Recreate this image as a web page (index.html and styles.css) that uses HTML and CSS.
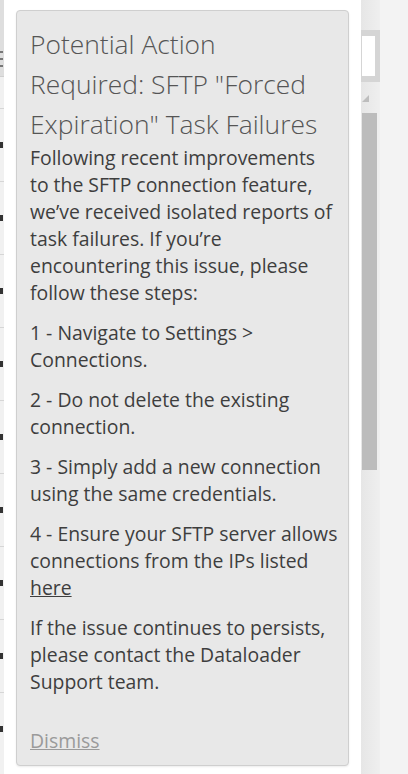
FILE: index.html
```html
<!DOCTYPE html>
<html>
<head>
<meta charset="utf-8">
<link rel="stylesheet" href="styles.css">
</head>
<body>
<div class="page">
  <div class="edge">
    <div class="edge-head"><span class="tick"></span><span class="tick"></span><span class="tick"></span></div>
    <div class="edge-gap"></div>
    <div class="edge-row"><span class="mark"></span></div>
    <div class="edge-row"><span class="mark"></span></div>
    <div class="edge-row"><span class="mark"></span></div>
    <div class="edge-row"><span class="mark"></span></div>
    <div class="edge-row"><span class="mark"></span></div>
    <div class="edge-row"><span class="mark"></span></div>
    <div class="edge-row"><span class="mark"></span></div>
    <div class="edge-row"><span class="mark"></span></div>
    <div class="edge-row"><span class="mark"></span></div>
  </div>
  <div class="panel">
    <div class="card">
      <h2 class="title">Potential Action Required: SFTP "Forced Expiration" Task Failures</h2>
      <p>Following recent improvements to the SFTP connection feature, we’ve received isolated reports of task failures. If you’re encountering this issue, please follow these steps:</p>
      <p>1 - Navigate to Settings &gt; Connections.</p>
      <p>2 - Do not delete the existing connection.</p>
      <p>3 - Simply add a new connection using the same credentials.</p>
      <p>4 - Ensure your SFTP server allows connections from the IPs listed <a class="link" href="#">here</a></p>
      <p>If the issue continues to persists, please contact the Dataloader Support team.</p>
      <a class="dismiss" href="#">Dismiss</a>
    </div>
  </div>
  <div class="side">
    <div class="side-box"><div class="side-input"></div></div>
    <div class="arrow"></div>
    <div class="track"><div class="thumb"></div></div>
  </div>
  <div class="rest"></div>
</div>
</body>
</html>
```
FILE: styles.css
```css
html, body {
  margin: 0;
  padding: 0;
  height: 100%;
  background: #f3f3f3;
  font-family: "Open Sans", "Liberation Sans", sans-serif;
}
.page {
  display: flex;
  height: 774px;
  overflow: hidden;
}
.edge {
  width: 4px;
  background: #f1f1f1;
  display: flex;
  flex-direction: column;
}
.edge-head {
  height: 77px;
  flex: none;
  background: #dedede;
  border-bottom: 1px solid #cfcfcf;
  box-sizing: border-box;
  display: flex;
  flex-direction: column;
  padding-top: 51px;
  gap: 5px;
}
.tick {
  display: block;
  width: 3px;
  height: 2px;
  background: #777;
}
.edge-gap {
  height: 31px;
  flex: none;
}
.edge-row {
  height: 73px;
  flex: none;
  border-top: 1px solid #d6d6d6;
  box-sizing: border-box;
  display: flex;
  align-items: center;
}
.mark {
  display: block;
  width: 3px;
  height: 6px;
  background: #333;
}
.panel {
  width: 357px;
  flex: none;
  background: #ffffff;
  padding: 10px 12px 0 12px;
  box-sizing: border-box;
}
.card {
  background: #e8e8e8;
  border: 1px solid #cfcfcf;
  border-radius: 4px;
  box-shadow: 0 1px 2px rgba(0,0,0,0.08);
  box-sizing: border-box;
  padding: 13px 10px 11px 13px;
  color: #3e3e3e;
}
.title {
  margin: 0;
  padding-right: 13px;
  font-weight: 300;
  font-size: 26.4px;
  line-height: 40px;
  color: #555;
}
.card p {
  margin: 0 0 13px 0;
  font-size: 19.4px;
  line-height: 27px;
}
.link {
  color: #3e3e3e;
  text-decoration: underline;
}
.dismiss {
  display: block;
  margin-top: 32px;
  font-size: 19.4px;
  line-height: 27px;
  color: #9a9a9a;
  text-decoration: underline;
}
.side {
  width: 19px;
  flex: none;
  background: linear-gradient(to right, #e6e6e6, #efefef);
  display: flex;
  flex-direction: column;
  padding-top: 30px;
  box-sizing: border-box;
}
.side-box {
  height: 52px;
  background: #d5d5d5;
  padding: 6px 5px 6px 1px;
  box-sizing: border-box;
}
.side-input {
  height: 100%;
  background: #fff;
}
.arrow {
  margin: 13px 0 0 1px;
  width: 0;
  height: 0;
  border-left: 7px solid transparent;
  border-bottom: 7px solid #bdbdbd;
}
.track {
  margin-top: 11px;
  padding-right: 3px;
}
.thumb {
  height: 357px;
  background: #bcbcbc;
  margin-left: 1px;
}
.rest {
  flex: 1;
  background: #f3f3f3;
}
```
